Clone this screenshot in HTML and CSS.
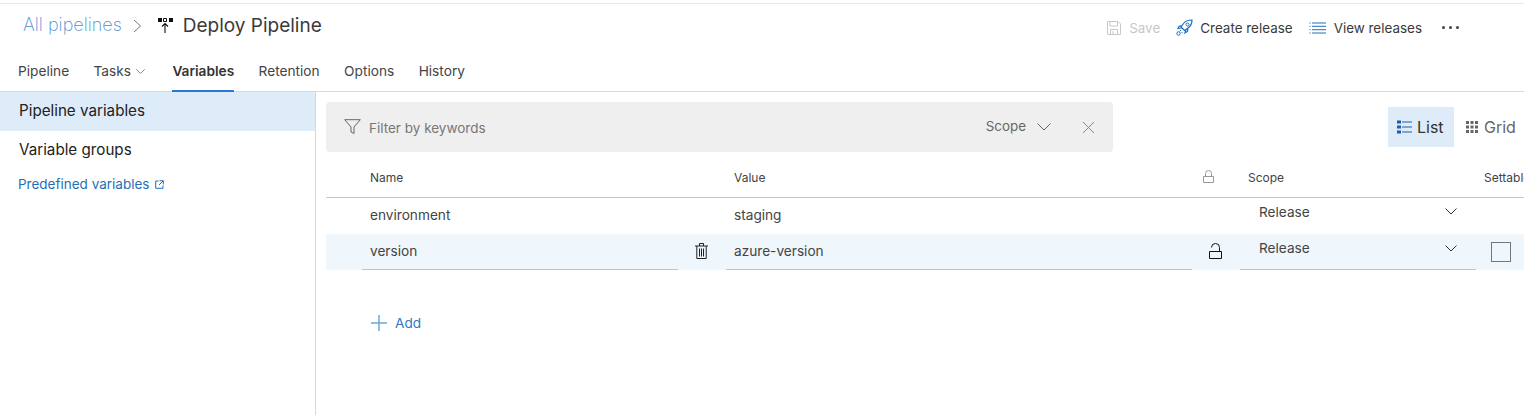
FILE: index.html
```html
<!DOCTYPE html>
<html lang="en">
<head>
<meta charset="utf-8">
<title>Deploy Pipeline</title>
<link rel="stylesheet" href="styles.css">
</head>
<body>
<div class="page">
  <header class="header">
    <div class="crumbs">
      <a class="crumb-link">All pipelines</a>
      <svg class="crumb-sep" width="9" height="14" viewBox="0 0 9 14"><path d="M1 1l6.5 6L1 13" fill="none" stroke="#777" stroke-width="1"/></svg>
      <svg class="pipe-icon" width="15" height="16" viewBox="0 0 15 16"><path d="M0 0h4v4H0zM11 0h4v4h-4z" fill="#111"/><path d="M5.500.5h3v3h-3z" fill="none" stroke="#111"/><path d="M7 15V6M4 8.500L7 5.500l3 3" fill="none" stroke="#111" stroke-width="1.100"/></svg>
      <span class="title">Deploy Pipeline</span>
    </div>
    <div class="actions">
      <span class="action disabled">
        <svg width="14" height="14" viewBox="0 0 14 14"><path d="M.5.500h10.500l2.500 2.500v10.500H.5zM3 .5v4.500h7.500V.5M3.500 13.500V8.500h7v5M6 10v3.500" fill="none" stroke="#c8c8c8"/></svg>
        <span>Save</span>
      </span>
      <span class="action create">
        <svg width="17" height="17" viewBox="0 0 17 17"><path d="M16 1c-3.500 0-6.500 1-8.500 3.500L5 8l3.500 3.500 3.500-2.500C15 7 16 4.500 16 1zM5.500 6.500L3 7.500 2 9.500l3.500-.5M10 11l-1 3 2.500-1.500.5-3.500" fill="none" stroke="#1e6fc4" stroke-width="1.200"/><circle cx="11.500" cy="5.500" r="1.500" fill="none" stroke="#1e6fc4"/><circle cx="2.500" cy="14.500" r="1.700" fill="none" stroke="#1e6fc4"/><path d="M5 11l-1.500 1.500M6.500 13L5.500 14" stroke="#1e6fc4"/></svg>
        <span>Create release</span>
      </span>
      <span class="action">
        <svg width="17" height="12" viewBox="0 0 17 12"><path d="M3 1h14M3 4.300h14M3 7.700h14M3 11h14" stroke="#1e6fc4"/><path d="M0 1h2M0 4.300h2M0 7.700h2M0 11h2" stroke="#7fb0e0"/></svg>
        <span>View releases</span>
      </span>
      <span class="more" aria-label="More"><i></i><i></i><i></i></span>
    </div>
  </header>

  <nav class="tabs">
    <a class="tab">Pipeline</a>
    <a class="tab tab-menu">Tasks
      <svg class="tab-chev" width="9" height="5" viewBox="0 0 9 5"><path d="M.3.300L4.500 4.500 8.700.3" fill="none" stroke="#888"/></svg>
    </a>
    <a class="tab active">Variables</a>
    <a class="tab">Retention</a>
    <a class="tab">Options</a>
    <a class="tab">History</a>
  </nav>

  <div class="body">
    <aside class="side">
      <div class="side-item selected">Pipeline variables</div>
      <div class="side-item">Variable groups</div>
      <a class="side-link">Predefined variables
        <svg width="9" height="9" viewBox="0 0 9 9"><path d="M3.500 1H.7v7.300H8V5.500M4.500.7h3.800v3.800M8 1L4 5" fill="none" stroke="#1e6fb8" stroke-width="1"/></svg>
      </a>
    </aside>

    <main class="main">
      <div class="toolbar">
        <div class="filter">
          <svg width="17" height="16" viewBox="0 0 17 16"><path d="M.7.700h15.600L10 8v6.500L7 13V8z" fill="none" stroke="#666"/></svg>
          <span class="filter-text">Filter by keywords</span>
          <span class="filter-scope">Scope</span>
          <svg class="filter-chev" width="14" height="8" viewBox="0 0 14 8"><path d="M.5.500L7 7 13.500.5" fill="none" stroke="#666"/></svg>
          <svg class="filter-x" width="13" height="13" viewBox="0 0 13 13"><path d="M1 1l11 11M12 1L1 12" fill="none" stroke="#888"/></svg>
        </div>
        <div class="views">
          <span class="view on">
            <svg width="15" height="14" viewBox="0 0 15 14"><path d="M0 .5h4v3H0zM0 5.500h4v3H0zM0 10.500h4v3H0z" fill="#1c5fa8"/><path d="M5 2h10M5 7h10M5 12h10" stroke="#1c5fa8"/></svg>
            List
          </span>
          <span class="view">
            <svg width="12" height="12" viewBox="0 0 12 12"><path d="M0 0h3v3H0zM4.500 0h3v3h-3zM9 0h3v3H9zM0 4.500h3v3H0zM4.500 4.500h3v3h-3zM9 4.500h3v3H9zM0 9h3v3H0zM4.500 9h3v3h-3zM9 9h3v3H9z" fill="#666"/></svg>
            Grid
          </span>
        </div>
      </div>

      <div class="table">
        <div class="row head">
          <span class="c-name">Name</span>
          <span></span>
          <span class="c-value">Value</span>
          <span class="c-lock"><svg width="11" height="13" viewBox="0 0 11 13"><path d="M.5 6.500h10v6H.5zM2.500 6.500V3.500a3 3 0 0 1 6 0v3" fill="none" stroke="#999"/></svg></span>
          <span class="c-scope">Scope</span>
          <span class="c-set">Settable at release</span>
        </div>
        <div class="row">
          <span class="c-name">environment</span>
          <span></span>
          <span class="c-value">staging</span>
          <span></span>
          <span class="c-select"><span>Release</span><svg width="12" height="7" viewBox="0 0 12 7"><path d="M.5.500L6 6 11.500.5" fill="none" stroke="#333"/></svg></span>
          <span></span>
        </div>
        <div class="row edit">
          <span class="c-name line">version</span>
          <span class="c-trash"><svg width="13" height="16" viewBox="0 0 13 16"><path d="M0 3h13M4.500 3V.5h4V3M1.800 3v12.500h9.400V3M4.500 5.500v8M6.500 5.500v8M8.500 5.500v8" fill="none" stroke="#222"/></svg></span>
          <span class="c-value line">azure-version</span>
          <span class="c-lock"><svg width="13" height="16" viewBox="0 0 13 16"><path d="M.5 8.500h12v7H.5zM2.500 4.500a4 4 0 0 1 8 0v4" fill="none" stroke="#111"/></svg></span>
          <span class="c-select line"><span>Release</span><svg width="12" height="7" viewBox="0 0 12 7"><path d="M.5.500L6 6 11.500.5" fill="none" stroke="#333"/></svg></span>
          <span class="c-check"><i></i></span>
        </div>
      </div>

      <a class="add">
        <svg width="16" height="16" viewBox="0 0 16 16"><path d="M8 0v16M0 8h16" stroke="#6ea6de" stroke-width="1.500"/></svg>
        Add
      </a>
    </main>
  </div>
</div>
</body>
</html>
```
FILE: styles.css
```css
* { box-sizing: border-box; }
html, body { margin: 0; height: 100%; overflow: hidden; background: #fff; }
body { font-family: Inter, "Noto Sans", sans-serif; color: #333; font-size: 14px; }
svg { display: block; flex: none; }

.page { width: 1524px; height: 415px; display: flex; flex-direction: column; padding-top: 3px; }
.header {
  height: 44px; flex: none; display: flex; align-items: center; justify-content: space-between;
  border-top: 1px solid #e8e8e8; padding: 0 65px 0 23px;
}
.crumbs { display: flex; align-items: center; }
.crumb-link { font-size: 18px; font-weight: 200; color: #4a90d0; line-height: 24px; margin-top: -2px; }
.crumb-sep { margin: 0 0 0 11px; }
.pipe-icon { margin-left: 16px; }
.title { font-size: 19px; color: #3a3a3a; margin-left: 10px; line-height: 24px; }

.actions { display: flex; align-items: center; gap: 16px; font-size: 13.450px; padding-top: 4px; }
.action { display: flex; align-items: center; gap: 8px; color: #3a3a3a; }
.action.create { gap: 7px; }
.action.disabled { color: #c8c8c8; }
.more { display: flex; gap: 4px; margin-left: 4px; }
.more i { width: 3px; height: 3px; border-radius: 50%; background: #444; display: block; }

.tabs { height: 45px; flex: none; display: flex; gap: 24.400px; padding: 0 18px; border-bottom: 1px solid #d8d8d8; }
.tab { display: flex; align-items: center; gap: 5px; font-size: 13.700px; color: #444; height: 45px; padding-top: 5px; border-bottom: 2px solid transparent; }
.tab-menu { padding-right: 3px; }
.tab.active { font-weight: 600; color: #333; border-bottom-color: #2b78d4; }
.tab-chev { margin-top: 1px; }

.body { flex: 1; display: flex; min-height: 0; }
.side { width: 316px; flex: none; border-right: 1px solid #d8d8d8; }
.side-item { height: 39px; padding: 0 0 1px 19px; display: flex; align-items: center; font-size: 15.200px; color: #222; line-height: 20px; }
.side-item.selected { background: #deebf8; }
.side-link { display: flex; align-items: center; gap: 6px; padding: 0 0 2px 18px; font-size: 13.500px; color: #1e6fb8; height: 30px; }

.main { flex: 1; min-width: 0; padding: 10px 0 0 10px; overflow: hidden; }
.toolbar { display: flex; align-items: center; }
.filter {
  width: 787px; height: 50px; flex: none; background: #efefef; border-radius: 4px;
  display: flex; align-items: center; padding: 0 18px; color: #777; font-size: 13.500px;
}
.filter-text { margin-left: 8px; flex: 1; color: #777; padding-top: 1px; }
.filter-scope { color: #666; padding-bottom: 3px; font-size: 13.400px; }
.filter-chev { margin-left: 11px; }
.filter-x { margin-left: 31px; }
.views { margin-left: auto; margin-right: 7px; display: flex; align-items: center; font-size: 16px; color: #666; }
.view { display: flex; align-items: center; gap: 5px; height: 40px; padding: 0 9px; }
.view.on { width: 66px; background: #deebf8; color: #333; }
.view:last-child { padding-right: 0; gap: 6px; margin-left: 3px; width: 60px; }

.table { margin-top: 8px; width: 1300px; }
.row {
  display: grid; grid-template-columns: 36px 316px 48px 466px 48px 236px 1fr;
  height: 36px; align-items: center; font-size: 13.650px; color: #444;
}
.row > :first-child { grid-column: 2; }
.row.head { height: 38px; font-size: 12px; border-bottom: 1px solid #c8c8c8; color: #444; padding-bottom: 3px; }
.row.head .c-lock { padding-right: 16px; }
.row:not(.head) { padding-bottom: 2px; }
.row.edit { background: #eff6fc; padding-bottom: 0; }
.c-name, .c-value { padding-left: 8px; }
.row.head .c-scope { padding-left: 8px; }
.c-set { white-space: nowrap; padding-left: 8px; }
.c-lock, .c-trash { display: flex; justify-content: center; padding: 0 2px 2px 0; }
.line { align-self: stretch; display: flex; align-items: center; border-bottom: 1px solid #c4c4c4; padding-bottom: 1px; }
.c-select { display: flex; align-items: center; justify-content: space-between; padding: 0 19px 7px 19px; align-self: stretch; }
.c-select.line { padding: 0 19px 7px 19px; }
.c-check { padding: 0 0 0 15px; display: block; }
.c-check i { display: block; width: 20px; height: 20px; border: 1px solid #777; }

.add { display: inline-flex; align-items: center; gap: 8px; margin: 45px 0 0 45px; font-size: 13.600px; color: #2b78c8; }
```
